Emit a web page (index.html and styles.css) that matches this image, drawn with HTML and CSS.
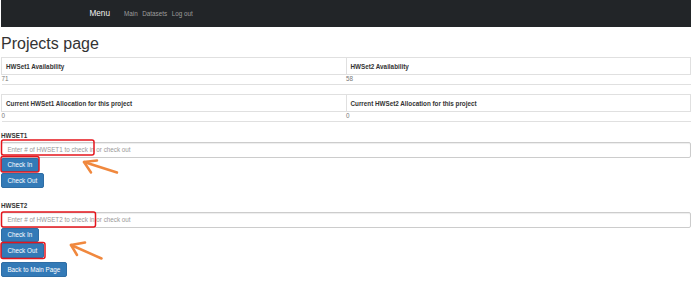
FILE: index.html
```html
<!DOCTYPE html>
<html>
<head>
<meta charset="utf-8">
<title>Projects page</title>
<link rel="stylesheet" href="styles.css">
</head>
<body>
<nav class="navbar">
  <div class="nav-inner">
    <span class="brand">Menu</span>
    <ul class="nav-links">
      <li>Main</li>
      <li>Datasets</li>
      <li>Log out</li>
    </ul>
  </div>
</nav>
<main class="page">
  <h1 class="title">Projects page</h1>
  <table class="stat-table">
    <tr><th>HWSet1 Availability</th><th>HWSet2 Availability</th></tr>
    <tr><td>71</td><td>58</td></tr>
  </table>
  <table class="stat-table">
    <tr><th>Current HWSet1 Allocation for this project</th><th>Current HWSet2 Allocation for this project</th></tr>
    <tr><td>0</td><td>0</td></tr>
  </table>
  <div class="hw-group">
    <label class="hw-label">HWSET1</label>
    <input class="hw-input" type="text" placeholder="Enter # of HWSET1 to check in or check out">
    <div class="btn-stack">
      <button class="btn">Check In</button>
      <button class="btn">Check Out</button>
    </div>
  </div>
  <div class="hw-group">
    <label class="hw-label">HWSET2</label>
    <input class="hw-input" type="text" placeholder="Enter # of HWSET2 to check in or check out">
    <div class="btn-stack">
      <button class="btn">Check In</button>
      <button class="btn">Check Out</button>
    </div>
  </div>
  <button class="btn back-btn">Back to Main Page</button>
</main>
<svg class="annotations" width="692" height="281" viewBox="0 0 692 281">
  <g fill="none" stroke="#e5161d" stroke-width="1.5">
    <rect x="1.5" y="140" width="92.5" height="15" rx="2"/>
    <rect x="1" y="156.5" width="38" height="15.5" rx="2"/>
    <rect x="1.5" y="212" width="94" height="15" rx="2"/>
    <rect x="1" y="242.5" width="44" height="16" rx="2"/>
  </g>
  <g fill="none" stroke="#f0883e" stroke-width="2.5" stroke-linecap="round" stroke-linejoin="round">
    <path d="M117 172.5 L84 162"/>
    <path d="M97 160.5 L84 162 L91 172.5"/>
    <path d="M101.5 258.5 L71 245"/>
    <path d="M85 242.5 L71 245 L77 255"/>
  </g>
</svg>
</body>
</html>
```
FILE: styles.css
```css
html, body {
  background: #fff;
}
body {
  margin: 0;
  padding: 0 1px;
  position: relative;
  font-family: "Liberation Sans", Arial, sans-serif;
  font-size: 6.3px;
  line-height: 9px;
  color: #333;
}
.navbar {
  height: 27px;
  background: #222528;
  display: flex;
  align-items: center;
}
.nav-inner {
  width: 527px;
  margin: 0 auto;
  padding-left: 7px;
  box-sizing: border-box;
  display: flex;
  align-items: center;
}
.brand {
  font-size: 8.2px;
  color: #f2f2f2;
  margin-right: 14px;
}
.nav-links {
  list-style: none;
  margin: 0;
  padding: 0;
  display: flex;
  gap: 4.6px;
  color: #9d9d9d;
  font-size: 6.3px;
}
.page {
  display: block;
}
.title {
  margin: 8px 0 4.5px;
  font-size: 16px;
  font-weight: 400;
  line-height: 17.6px;
  color: #333;
}
.stat-table {
  width: 100%;
  table-layout: fixed;
  border-collapse: collapse;
  margin-bottom: 9.5px;
}
.stat-table th {
  text-align: left;
  font-weight: bold;
  padding: 3.5px 4px;
  border: 1px solid #e0e0e0;
  line-height: 9px;
  color: #333;
}
.stat-table td {
  padding: 0;
  border-bottom: 1px solid #e0e0e0;
  line-height: 8.5px;
  color: #777;
}
.hw-group {
  margin-bottom: 13px;
}
.hw-label {
  display: block;
  font-weight: bold;
  margin-bottom: 2px;
}
.hw-input {
  display: block;
  width: 100%;
  box-sizing: border-box;
  height: 15.5px;
  padding: 0 5.4px;
  margin: 0;
  font-family: inherit;
  font-size: 6.3px;
  color: #555;
  border: 1px solid #ccc;
  border-radius: 2px;
  box-shadow: inset 0 1px 1px rgba(0,0,0,.075);
  outline: none;
}
.hw-input::placeholder {
  color: #999;
}
.btn-stack {
  display: flex;
  flex-direction: column;
  align-items: flex-start;
  gap: 1px;
}
.btn {
  display: block;
  height: 14.8px;
  padding: 0 5.4px;
  margin: 0;
  font-family: inherit;
  font-size: 6.3px;
  line-height: 1;
  color: #fff;
  background: #337ab7;
  border: 1px solid #2e6da4;
  border-radius: 2px;
}
.back-btn {
  margin-top: -9px;
}
.annotations {
  position: absolute;
  left: 0;
  top: 0;
  pointer-events: none;
}
```
